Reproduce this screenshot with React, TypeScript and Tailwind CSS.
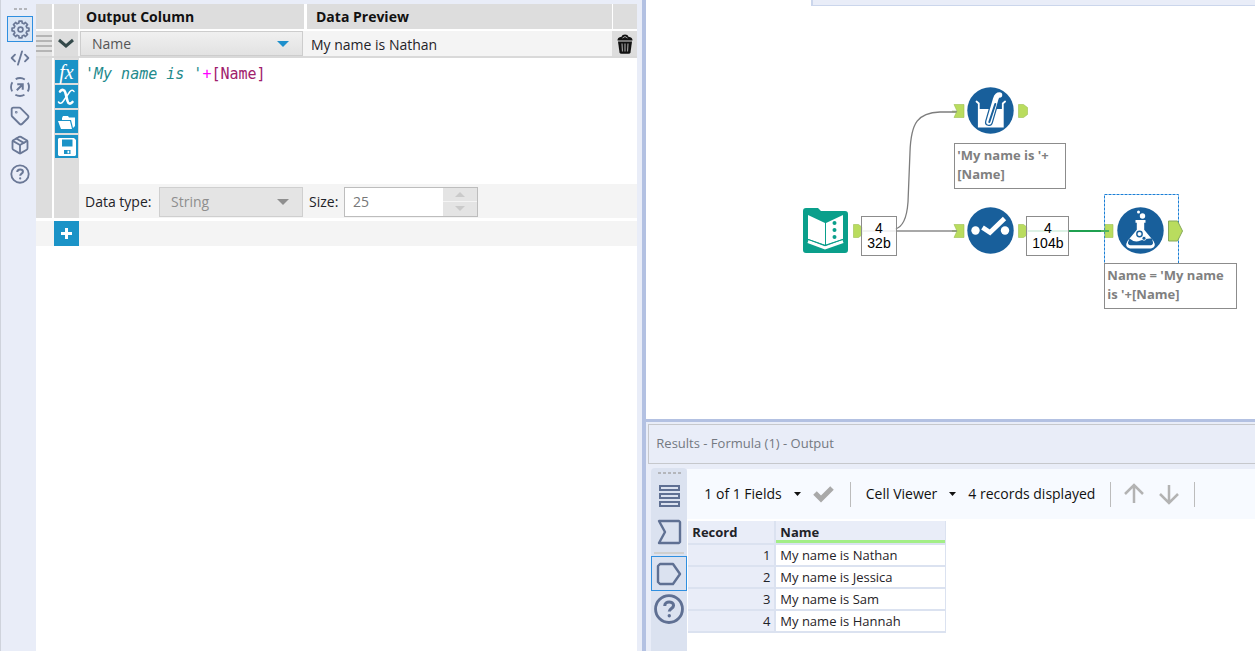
import { useState } from "react";
import type { ReactNode } from "react";
import { CodeXml, Package, Tag } from "lucide-react";

const records = ["My name is Nathan", "My name is Jessica", "My name is Sam", "My name is Hannah"];

export default function App() {
  return (
    <div className="flex min-h-screen bg-white font-['Open_Sans',sans-serif] text-[13px] text-[#1f2328]">
      <div className="flex w-[51.5%] shrink-0 border-r-4 border-[#b3c1e2]">
        <ConfigRail />
        <div className="flex min-w-0 flex-1 flex-col bg-[#e9edf8] pt-1 pr-[5px]">
          <div className="flex-1 bg-white">
            <FormulaPanel />
          </div>
        </div>
      </div>
      <div className="flex min-w-0 flex-1 flex-col">
        <Canvas />
        <Results />
      </div>
    </div>
  );
}

/* Configuration */

function ConfigRail() {
  const items: { label: string; icon: ReactNode }[] = [
    { label: "Configuration", icon: <GearIcon /> },
    { label: "XML view", icon: <CodeXml size={20} strokeWidth={2.2} /> },
    { label: "Navigation", icon: <NavigateIcon /> },
    { label: "Annotation", icon: <Tag size={20} strokeWidth={2.2} /> },
    { label: "Package", icon: <Package size={20} strokeWidth={2.2} /> },
    { label: "Help", icon: <HelpIcon size={22} /> },
  ];

  return (
    <nav className="flex w-9 shrink-0 flex-col items-center border-l border-[#cfd3dc] bg-[#e9edf8] pl-[3px] text-[#6a7896]">
      <div className="flex h-4 items-center gap-0.5 pt-0.5">
        <Dots count={3} />
      </div>
      <div className="flex flex-col gap-[3px]">
        {items.map((item, i) => (
          <button
            key={item.label}
            aria-label={item.label}
            className={
              i === 0
                ? "flex h-[26px] w-[26px] items-center justify-center border border-[#2f8fe0] bg-[#dbe6f5]"
                : "flex h-[26px] w-[26px] items-center justify-center"
            }
          >
            {item.icon}
          </button>
        ))}
      </div>
    </nav>
  );
}

function FormulaPanel() {
  const [formula, setFormula] = useState("'My name is '+[Name]");

  return (
    <div>
      <div className="flex h-[25px] gap-px text-sm font-bold text-[#111]">
        <div className="w-4 bg-[#ddd]" />
        <div className="ml-px w-[25px] bg-[#ddd]" />
        <div className="flex w-56 items-center bg-[#ddd] pl-1.5">Output Column</div>
        <div className="ml-0.5 flex flex-1 items-center bg-[#ddd] pl-[9px]">Data Preview</div>
        <div className="w-6 bg-[#ddd]" />
      </div>

      <div className="mt-0.5 flex h-[27px] border-b-2 border-[#d9d9d9] bg-[#f4f4f4]">
        <div className="flex w-4 flex-col justify-center gap-[3px] bg-[#e4e4e4]">
          {[0, 1, 2, 3].map((n) => (
            <div key={n} className="h-0.5 bg-[#b5b5b5]" />
          ))}
        </div>
        <button aria-label="Collapse" className="mx-0.5 flex w-6 items-center justify-center bg-[#ddd]">
          <svg width="16" height="11" viewBox="0 0 16 11" fill="none" stroke="#34494a" strokeWidth="3">
            <path d="M1 2l7 6 7-6" />
          </svg>
        </button>
        <div className="relative w-[223px]">
          <select
            aria-label="Output column"
            className="h-full w-full appearance-none border border-[#cdcdcd] bg-linear-to-b from-[#f0f0f0] to-[#e2e2e2] pl-[11px] text-sm text-[#555]"
          >
            <option>Name</option>
          </select>
          <svg className="pointer-events-none absolute top-2.5 right-3.5" width="12" height="6" viewBox="0 0 12 6" fill="#1e90cc">
            <path d="M0 0h12L6 6z" />
          </svg>
        </div>
        <div className="flex flex-1 items-center pt-0.5 pl-2 text-sm">My name is Nathan</div>
        <button aria-label="Delete" className="flex w-[25px] items-center justify-center bg-[#ddd]">
          <TrashIcon />
        </button>
      </div>

      <div className="flex">
        <div className="w-4 bg-[#ddd]" />
        <div className="mx-0.5 mr-0 flex w-[25px] flex-col items-center gap-0.5 bg-[#ddd] pt-0.5">
          <ToolButton label="Functions">
            <span className="font-['Liberation_Serif',serif] text-xl leading-5 italic">fx</span>
          </ToolButton>
          <ToolButton label="Columns and constants">
            <svg width="19" height="18" viewBox="0 0 19 18" fill="none" stroke="currentColor" strokeLinecap="round">
              <path d="M3 3.500C5 1 7.500 1.500 8.300 4.500L10.500 13c.8 3 3 3.500 5 1" strokeWidth="2.600" />
              <path d="M17 3.500c-1-1.800-2.800-1.500-4 0L6 13.500c-1.400 2-3.500 2.200-4.500.5" strokeWidth="1.500" />
            </svg>
          </ToolButton>
          <ToolButton label="Open expression">
            <svg width="18" height="16" viewBox="0 0 18 16" fill="currentColor">
              <path d="M4 4l1-2h5l1 1.500h6V12l-2 2-2-8H4z" />
              <path d="M0 7h12l2 8H3z" />
            </svg>
          </ToolButton>
          <ToolButton label="Save expression">
            <svg width="18" height="18" viewBox="0 0 18 18" fill="currentColor">
              <path fillRule="evenodd" d="M1 0h15l2 2v15l-1 1H1l-1-1V1zM4 1.500v7h10.500v-7zM6 12v4h6.500v-4z" />
              <path d="M9.500 12.700h1.700v2.600H9.500z" />
            </svg>
          </ToolButton>
        </div>
        <div className="flex min-w-0 flex-1 flex-col">
          {/* Highlighted text sits under a transparent textarea */}
          <div className="relative h-[126px] font-['DejaVu_Sans_Mono',monospace] text-[15px] leading-5">
            <pre aria-hidden="true" className="px-1.5 py-1.5 font-[inherit]">
              <Highlight code={formula} />
            </pre>
            <textarea
              aria-label="Expression"
              value={formula}
              onChange={(e) => setFormula(e.target.value)}
              spellCheck={false}
              className="absolute inset-0 h-full w-full resize-none bg-transparent px-1.5 py-1.5 text-transparent caret-black outline-none"
            />
          </div>
          <div className="flex h-[34px] items-center bg-[#f4f4f4] pt-px pl-1.5 text-sm">
            <label htmlFor="data-type" className="w-[74px]">
              Data type:
            </label>
            <div className="relative h-[30px] w-36">
              <select
                id="data-type"
                disabled
                className="h-full w-full appearance-none border border-[#cfcfcf] bg-[#e4e4e4] pl-[11px] text-sm text-[#8e8e8e] opacity-100"
              >
                <option>String</option>
              </select>
              <svg className="pointer-events-none absolute top-3 right-3.5" width="12" height="6" viewBox="0 0 12 6" fill="#8f8f8f">
                <path d="M0 0h12L6 6z" />
              </svg>
            </div>
            <label htmlFor="size" className="ml-1.5 w-[35px]">
              Size:
            </label>
            <div className="flex h-[30px] w-[134px] border border-[#bdbdbd] bg-white">
              <input id="size" defaultValue="25" className="w-[98px] pl-2 text-sm text-[#777] outline-none" />
              <div className="flex flex-1 flex-col gap-px bg-[#f4f4f4]">
                <button aria-label="Increase" className="flex flex-1 items-center justify-center bg-[#e4e4e4]">
                  <svg width="10" height="5" viewBox="0 0 10 5" fill="#cacaca">
                    <path d="M0 5h10L5 0z" />
                  </svg>
                </button>
                <button aria-label="Decrease" className="flex flex-1 items-center justify-center bg-[#e4e4e4]">
                  <svg width="10" height="5" viewBox="0 0 10 5" fill="#cacaca">
                    <path d="M0 0h10L5 5z" />
                  </svg>
                </button>
              </div>
            </div>
          </div>
        </div>
      </div>

      <div className="mt-[3px] flex h-[25px] bg-[#f4f4f4] pl-[18px]">
        <button aria-label="Add expression" className="flex w-[25px] items-center justify-center bg-[#1b93c7] text-white">
          <svg width="11" height="11" viewBox="0 0 11 11" stroke="currentColor" strokeWidth="3">
            <path d="M0 5.500h11M5.500 0v11" />
          </svg>
        </button>
      </div>
    </div>
  );
}

function ToolButton({ label, children }: { label: string; children: ReactNode }) {
  return (
    <button aria-label={label} className="flex h-[23px] w-[23px] items-center justify-center bg-[#1b93c7] text-white">
      {children}
    </button>
  );
}

function Highlight({ code }: { code: string }) {
  const tokens = code.match(/'[^']*'?|\[[^\]]*\]?|[^'[]+/g) ?? [];
  return (
    <>
      {tokens.map((t, i) => (
        <span
          key={i}
          className={
            t.startsWith("'") ? "text-[#1e8a8c] italic" : t.startsWith("[") ? "text-[#a0206c]" : "text-[#ff00ff]"
          }
        >
          {t}
        </span>
      ))}
    </>
  );
}

/* Workflow canvas */

function Canvas() {
  return (
    <div className="relative min-h-[419px] flex-1 overflow-hidden bg-white">
      <div className="absolute top-0 right-0 left-[165px] h-1.5 border-b border-l-2 border-[#cbd6ec] bg-[#e9edf8]" />

      <svg className="absolute inset-0 h-full w-full" fill="none">
        <path d="M249 229C258 227 261 216 262 202L264 152C265 122 272 113 294 112H311" stroke="#7d7d7d" strokeWidth="1.300" />
        <path d="M212 231H311" stroke="#a8a8a8" strokeWidth="2" />
        <path d="M378 231H462" stroke="#1fa050" strokeWidth="2" />
        <rect x="458.500" y="194.500" width="74" height="80" stroke="#1b7fd6" strokeDasharray="3 1" />
        <g fill="#b9dc5e" stroke="#9cc052" strokeWidth="0.600">
          <path d="M308 104.500h10v13h-10l3-6.500z" />
          <path d="M372.500 104.500h5l4 3v7l-4 3h-5z" />
          <path d="M308 224.500h10v13h-10l3-6.500z" />
          <path d="M372.500 224.500h5l4 3v7l-4 3h-5z" />
          <path d="M207.500 224.500h5l4 3v7l-4 3h-5z" />
          <path d="M459 224.500h8v13h-8z" />
          <path d="M522.500 221h9l5 10-5 10h-9z" stroke="#86a85a" strokeWidth="1" />
        </g>
        <path d="M306 111.500h5M306 231h5" stroke="#8d9a78" strokeWidth="1.500" />
        <path d="M455 231H463" stroke="#4fb45a" strokeWidth="2" />
      </svg>

      <Tool label="Input Data" className="absolute top-[208px] left-[157px]">
        <svg width="45" height="46" viewBox="0 0 45 46">
          <path d="M3 0h12l3 3h24q3 0 3 3v36q0 3-3 3H3q-3 0-3-3V3q0-3 3-3z" fill="#0a9f8b" />
          <path d="M5 7l17 8v22L5 31zM40 7l-17 8v22l17-6z" fill="#fff" />
          <path d="M5 33.500l17 6.500 18-6.500" fill="none" stroke="#fff" strokeWidth="3" />
          <path d="M5 31.300l17 6 18-6" fill="none" stroke="#0a9f8b" strokeWidth="1" />
          <path d="M22.500 15v22" stroke="#0a9f8b" />
          <g fill="#0a9f8b">
            <circle cx="31.500" cy="15" r="2" />
            <circle cx="31.500" cy="22" r="2" />
            <circle cx="31.500" cy="29" r="2" />
          </g>
        </svg>
      </Tool>
      <Tool label="Test" className="absolute top-[87px] left-[321px]">
        <svg width="47" height="47" viewBox="0 0 47 47">
          <circle cx="23.500" cy="23.500" r="23.200" fill="#185f9b" />
          <path d="M9.500 14.500l2.300 2v23h24v-23l2.300-2" fill="none" stroke="#fff" strokeWidth="1.800" strokeLinecap="round" />
          <path d="M11.500 22h24.500v18H11.500z" fill="#fff" />
          <path d="M32.500 8c-2.500 0-3 1.500-3.800 4L22 35" fill="none" stroke="#185f9b" strokeWidth="8" strokeLinecap="round" />
          <path d="M32.500 8c-2.500 0-3 1.500-3.800 4L22 35" fill="none" stroke="#fff" strokeWidth="5.500" strokeLinecap="round" />
          <path d="M28.300 17L22.300 35" fill="none" stroke="#185f9b" strokeWidth="2" strokeLinecap="round" />
        </svg>
      </Tool>
      <Tool label="Select" className="absolute top-[207px] left-[321px]">
        <svg width="47" height="47" viewBox="0 0 47 47">
          <circle cx="23.500" cy="23.500" r="23.200" fill="#185f9b" />
          <circle cx="8.500" cy="23.500" r="4.200" fill="#fff" />
          <circle cx="38" cy="23.500" r="4.200" fill="#fff" />
          <path d="M15.500 20.500l7.500 5L37.500 11.500" fill="none" stroke="#fff" strokeWidth="4.800" />
        </svg>
      </Tool>
      <Tool label="Formula" className="absolute top-[207px] left-[471px]">
        <svg width="47" height="47" viewBox="0 0 47 47">
          <circle cx="23.500" cy="23.500" r="23.200" fill="#185f9b" />
          <path d="M18.500 13h10v2.800h-1.300v7L36.500 34q3.500 6-2.500 7.500H13q-6-1.500-2.500-7.500l9.300-11.200v-7h-1.300z" fill="#fff" />
          <path d="M12.500 31.500q5 4.500 11 2t11.500-2l1 4q.3 2.200-2.500 2.800h-20q-2.800-.6-2.500-2.800z" fill="#185f9b" />
          <circle cx="22.500" cy="27" r="2.700" fill="none" stroke="#185f9b" strokeWidth="1.400" />
          <circle cx="27" cy="31.300" r="2" fill="#185f9b" stroke="#fff" strokeWidth="0.800" />
          <circle cx="25.500" cy="9" r="2.700" fill="#fff" />
          <circle cx="21.500" cy="5" r="1.500" fill="#fff" />
        </svg>
      </Tool>

      <div className="absolute top-[216px] left-[215px]">
        <Connection count="4" size="32b" />
      </div>
      <div className="absolute top-[216px] left-[380px]">
        <Connection count="4" size="104b" />
      </div>

      <div className="absolute top-[143px] left-[308px] h-[46px] w-28 border border-[#8c8c8c] bg-white px-0.5 pt-0.5 text-[13px] leading-[19px] font-bold text-[#808080]">
        'My name is '+ [Name]
      </div>
      <div className="absolute top-[263px] left-[458px] h-[46px] w-[133px] border border-[#8c8c8c] bg-white px-0.5 pt-0.5 text-[13px] leading-[19px] font-bold text-[#808080]">
        Name = 'My name is '+[Name]
      </div>
    </div>
  );
}

function Tool({ label, className, children }: { label: string; className: string; children: ReactNode }) {
  return (
    <button aria-label={label} className={className}>
      {children}
    </button>
  );
}

function Connection({ count, size }: { count: string; size: string }) {
  return (
    <div className="flex h-10 min-w-[35px] flex-col items-center justify-center border border-[#8c8c8c] bg-white/85 px-[5px] font-['Liberation_Sans',sans-serif] text-sm leading-[15px] text-black">
      <span>{count}</span>
      <span>{size}</span>
    </div>
  );
}

/* Results */

function Results() {
  return (
    <section className="border-t-3 border-[#b3c1e2] bg-[#e9edf8]">
      <h2 className="mt-0.5 ml-0.5 flex h-10 items-center border border-r-0 border-[#c6c8cc] pl-[7px] text-[13px] text-[#747981]">
        Results - Formula (1) - Output
      </h2>
      <div className="flex">
        <div className="mt-1 ml-[5px] flex w-9 shrink-0 flex-col items-center rounded-t bg-[#dbe2f0] text-[#5f7093]">
          <div className="flex h-2.5 items-center gap-0.5">
            <Dots count={5} />
          </div>
          <button aria-label="All messages" className="mt-0.5 flex h-8 w-full items-center justify-center">
            <svg width="21" height="24" viewBox="0 0 21 24" fill="none" stroke="currentColor" strokeWidth="2">
              <path d="M1 2h19v4H1zM1 10h19v4H1zM1 18h19v4H1z" />
            </svg>
          </button>
          <button aria-label="Input anchor" className="mt-1 flex h-8 w-full items-center justify-center">
            <svg width="26" height="26" viewBox="0 0 26 26" fill="none" stroke="currentColor" strokeWidth="2.400" strokeLinejoin="round">
              <path d="M3 2h20l1 1v20l-1 1H3l6-11z" />
            </svg>
          </button>
          <div className="mt-1 h-0.5 w-[30px] bg-[#cfcfcf]" />
          <button aria-label="Output anchor" className="mt-0.5 flex h-[35px] w-full items-center justify-center border border-[#2f8fe0]">
            <svg width="26" height="24" viewBox="0 0 26 24" fill="none" stroke="currentColor" strokeWidth="2.400" strokeLinejoin="round">
              <path d="M4 2h13l7 10-7 10H4l-2-2V4z" />
            </svg>
          </button>
          <button aria-label="Help" className="mt-0.5 flex h-8 w-full items-center justify-center">
            <HelpIcon size={34} />
          </button>
        </div>
        <div className="min-w-0 flex-1 bg-white">
          <div className="bg-[#e9edf8] pt-[5px]">
            <div className="flex h-[50px] items-center bg-[#f7faff] pl-[17px] text-sm text-[#111]">
              <button className="flex items-center gap-3">
                1 of 1 Fields <Caret />
              </button>
              <button aria-label="Apply" className="ml-3">
                <svg width="22" height="18" viewBox="0 0 22 18" fill="none" stroke="#a9a9a9" strokeWidth="5">
                  <path d="M2 8l6 6L19 3" />
                </svg>
              </button>
              <Divider className="mx-[15px]" />
              <button className="flex items-center gap-3">
                Cell Viewer <Caret />
              </button>
              <span className="ml-3">4 records displayed</span>
              <Divider className="mr-3 ml-[15px]" />
              <button aria-label="Previous" className="text-[#b3b3b3]">
                <ArrowIcon d="M11 20V2M2 11l9-9 9 9" />
              </button>
              <button aria-label="Next" className="ml-[13px] text-[#b3b3b3]">
                <ArrowIcon d="M11 2v18M2 11l9 9 9-9" />
              </button>
              <Divider className="ml-3.5" />
            </div>
          </div>
          <div className="pt-0.5 pb-[18px]">
            <table className="ml-px border-separate border-spacing-0 text-[13px]">
              <thead>
                <tr className="h-6 text-left">
                  <th className="w-[88px] border-r-2 border-b-2 border-[#dbe2f0] bg-[#e9edf8] px-1 py-0 leading-5">Record</th>
                  <th className="w-[170px] border-r border-b-2 border-[#dbe2f0] bg-[#e9edf8] p-0 leading-5">
                    <div className="h-[21px] border-b-3 border-[#a3ee86] pl-1">Name</div>
                  </th>
                </tr>
              </thead>
              <tbody>
                {records.map((name, i) => (
                  <tr key={name} className="h-[22px]">
                    <td className="border-r-2 border-b-2 border-[#dbe2f0] bg-[#e9edf8] py-0 pr-1 text-right leading-5">{i + 1}</td>
                    <td className="border-r border-b-2 border-[#dbe2f0] bg-white py-0 pl-1 leading-5">{name}</td>
                  </tr>
                ))}
              </tbody>
            </table>
          </div>
        </div>
      </div>
    </section>
  );
}

function Divider({ className }: { className: string }) {
  return <div className={`h-[25px] w-px bg-[#bcbcbc] ${className}`} />;
}

function Caret() {
  return (
    <svg width="7" height="4" viewBox="0 0 7 4" fill="currentColor">
      <path d="M0 0h7L3.500 4z" />
    </svg>
  );
}

function Dots({ count }: { count: number }) {
  return (
    <>
      {Array.from({ length: count }, (_, i) => (
        <span key={i} className="h-0.5 w-[3px] bg-[#b4b6bb]" />
      ))}
    </>
  );
}

/* Icons */

function ArrowIcon({ d }: { d: string }) {
  return (
    <svg width="22" height="22" viewBox="0 0 22 22" fill="none" stroke="currentColor" strokeWidth="2.500">
      <path d={d} />
    </svg>
  );
}

// Eight teeth, each going from the inner ring to the outer one and back
function gearPath() {
  const points: string[] = [];
  for (let i = 0; i < 8; i++) {
    for (const [offset, radius] of [[-14, 7.6], [-10, 9.8], [10, 9.8], [14, 7.6]]) {
      const a = ((i * 45 + offset) * Math.PI) / 180;
      points.push(`${(12 + radius * Math.cos(a)).toFixed(2)} ${(12 + radius * Math.sin(a)).toFixed(2)}`);
    }
  }
  return `M${points.join("L")}Z`;
}

function GearIcon() {
  return (
    <svg width="21" height="21" viewBox="0 0 24 24" fill="none" stroke="currentColor" strokeWidth="1.900" strokeLinejoin="round" className="shrink-0">
      <path d={gearPath()} />
      <circle cx="12" cy="12" r="2.800" />
    </svg>
  );
}

function NavigateIcon() {
  return (
    <svg width="22" height="22" viewBox="0 0 24 24" fill="none" stroke="currentColor" strokeWidth="2">
      <circle cx="12" cy="12" r="9.800" strokeDasharray="10.400 5" strokeDashoffset="5.200" />
      <path d="M8.500 15.500l6-6M9 9h6v6" strokeWidth="2.200" />
    </svg>
  );
}

function HelpIcon({ size }: { size: number }) {
  return (
    <svg width={size} height={size} viewBox="0 0 24 24" fill="none" stroke="currentColor" strokeWidth="2" className="shrink-0">
      <circle cx="12" cy="12" r="9.500" />
      <path d="M9 9.800c0-3.800 6.200-3.500 6.200-.3 0 2-3 2.200-3 4.300" strokeWidth="2.200" />
      <circle cx="12.200" cy="16.800" r="1.200" fill="currentColor" stroke="none" />
    </svg>
  );
}

function TrashIcon() {
  return (
    <svg width="16" height="20" viewBox="0 0 16 20">
      <path d="M1 7.500h14l-1.500 11q-.3 1.300-2 1.300h-7q-1.700 0-2-1.300z" fill="#111" />
      <path d="M5 9.500l.5 8M8 9.500v8M11 9.500l-.5 8" stroke="#999" strokeWidth="1.200" />
      <path d="M.5 6.500q-.3-3 4-3.800Q5 .5 8 .5t3.500 2.200q4.300.8 4 3.800z" fill="#111" />
      <path d="M5.500 4q2.500-3 5 0" fill="none" stroke="#aaa" />
    </svg>
  );
}
